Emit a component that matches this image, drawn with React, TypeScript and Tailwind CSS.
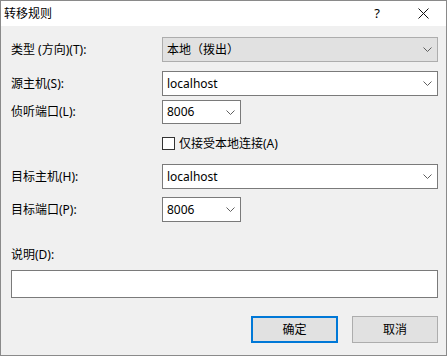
import React from 'react'

const font = { fontFamily: '"Noto Sans", "Noto Sans CJK SC", sans-serif' }

function Chevron() {
  return (
    <svg width="9" height="5" viewBox="0 0 9 5" className="shrink-0">
      <polyline points="0.5,0.5 4.5,4.5 8.5,0.5" fill="none" stroke="#5f5f5f" strokeWidth="1" />
    </svg>
  )
}

function Combo({ value, wide = true, list = false, h = 'h-[25px]' }: { value: string; wide?: boolean; list?: boolean; h?: string }) {
  return (
    <div
      className={`${wide ? 'flex-1' : 'w-[79px]'} ${h} flex items-center justify-between pl-[4px] pr-[5px] border ${
        list ? 'bg-[#e1e1e1] border-[#adadad]' : 'bg-white border-[#7a7a7a]'
      }`}
    >
      <span className="text-[12px] leading-none text-black">{value}</span>
      <Chevron />
    </div>
  )
}

function Row({ label, children, className = '' }: { label: string; children: React.ReactNode; className?: string }) {
  return (
    <div className={`flex items-center ${className}`}>
      <span className="w-[151px] shrink-0 text-[12px] leading-none text-black">{label}</span>
      {children}
    </div>
  )
}

export default function App() {
  return (
    <div style={font} className="w-[447px] h-[356px] border border-[#8a8a8a] bg-[#f0f0f0] flex flex-col select-none">
      {/* Title bar */}
      <div className="h-[25px] bg-white flex items-center justify-between shrink-0">
        <span className="pl-[3px] text-[12px] leading-none text-black">转移规则</span>
        <div className="flex items-center">
          <span className="text-[13px] leading-none text-black mr-[38px]">?</span>
          <svg width="11" height="11" viewBox="0 0 11 11" className="mr-[17px]">
            <path d="M0.5 0.5 L10.5 10.5 M10.5 0.5 L0.5 10.5" stroke="#111" strokeWidth="1" />
          </svg>
        </div>
      </div>

      {/* Form */}
      <div className="flex flex-col pl-[10px] pr-[8px]">
        <Row label="类型 (方向)(T):" className="mt-[11px]">
          <Combo value="本地（拨出）" list />
        </Row>
        <Row label="源主机(S):" className="mt-[9px]">
          <Combo value="localhost" />
        </Row>
        <Row label="侦听端口(L):" className="mt-[4px]">
          <Combo value="8006" wide={false} h="h-[24px]" />
        </Row>
        <div className="flex items-center mt-[13px] pl-[151px]">
          <div className="w-[13px] h-[13px] border border-[#333] bg-white shrink-0" />
          <span className="ml-[4px] text-[12px] leading-none text-black">仅接受本地连接(A)</span>
        </div>
        <Row label="目标主机(H):" className="mt-[14px]">
          <Combo value="localhost" />
        </Row>
        <Row label="目标端口(P):" className="mt-[8px]">
          <Combo value="8006" wide={false} />
        </Row>
        <span className="mt-[27px] text-[12px] leading-none text-black">说明(D):</span>
        <div className="mt-[9px] h-[28px] bg-white border border-[#7a7a7a]" />
        <div className="mt-[18px] flex justify-end gap-[14px]">
          <button className="w-[87px] h-[27px] border-2 border-[#0078d7] bg-[#e1e1e1] text-[12px] leading-none text-black">
            确定
          </button>
          <button className="w-[86px] h-[27px] border border-[#adadad] bg-[#e1e1e1] text-[12px] leading-none text-black">
            取消
          </button>
        </div>
      </div>
    </div>
  )
}
